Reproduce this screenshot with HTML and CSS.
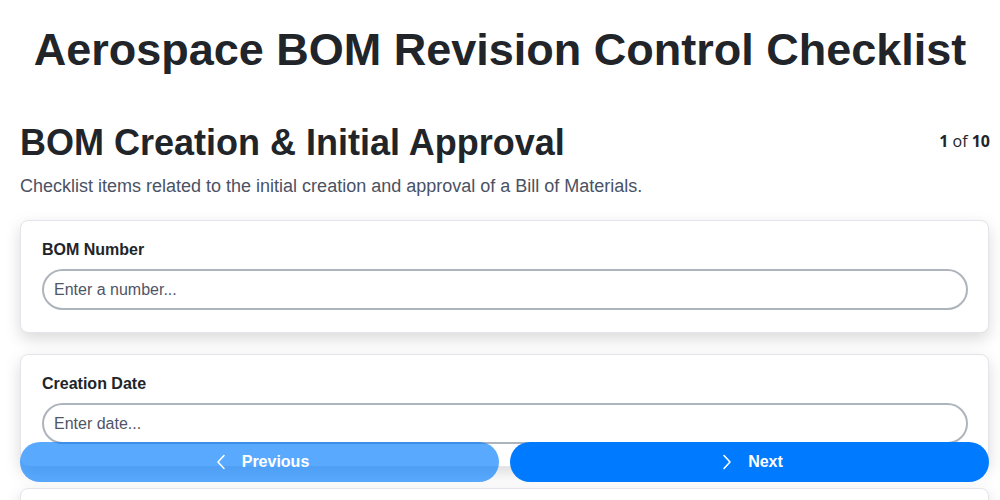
FILE: index.html
```html
<!DOCTYPE html>
<html lang="en">
<head>
<meta charset="utf-8" />
<title>Aerospace BOM Revision Control Checklist</title>
<link rel="stylesheet" href="styles.css">
</head>
<body>
<h1 class="title">Aerospace BOM Revision Control Checklist</h1>

<div class="page">
  <div class="head">
    <h2>BOM Creation &amp; Initial Approval</h2>
    <span class="count"><b>1</b> of <b>10</b></span>
  </div>
  <p class="desc">Checklist items related to the initial creation and approval of a Bill of Materials.</p>

  <div class="card">
    <label class="lbl" for="bom">BOM Number</label>
    <input class="field" id="bom" type="text" placeholder="Enter a number..." />
  </div>

  <div class="card">
    <label class="lbl" for="cdate">Creation Date</label>
    <input class="field" id="cdate" type="text" placeholder="Enter date..." />
  </div>

  <div class="card">
    <label class="lbl" for="author">Created By</label>
    <input class="field" id="author" type="text" placeholder="Enter a name..." />
  </div>
</div>

<div class="nav">
  <button class="btn prev" disabled>
    <svg width="10" height="16" viewBox="0 0 10 16"><path d="M8 1.5 L2 8 L8 14.5" fill="none" stroke="#fff" stroke-width="1.6" stroke-linecap="round" stroke-linejoin="round"/></svg>
    <span>Previous</span>
  </button>
  <button class="btn next">
    <svg width="10" height="16" viewBox="0 0 10 16"><path d="M2 1.5 L8 8 L2 14.5" fill="none" stroke="#fff" stroke-width="1.6" stroke-linecap="round" stroke-linejoin="round"/></svg>
    <span>Next</span>
  </button>
</div>
</body>
</html>
```

FILE: styles.css
```css
*{margin:0;padding:0;box-sizing:border-box;}
body{background:#fff;font-family:"Liberation Sans",Arial,sans-serif;color:#212529;}

.title{font-size:45px;font-weight:bold;text-align:center;margin:24px 0 0 0;color:#212529;}

.page{padding:46px 11px 0 20px;}
.head{display:flex;justify-content:space-between;align-items:flex-start;}
.head h2{font-size:36px;font-weight:bold;color:#212529;}
.count{font-family:"Open Sans","Noto Sans",sans-serif;font-size:16px;color:#212529;margin-top:8px;margin-right:-1px;}
.count b{font-weight:bold;}
.desc{font-size:18px;color:#4a5264;margin:12px 0 23px 0;}

.card{background:#fff;border:1px solid #e4e4ea;border-radius:8px;padding:20px 20px 22px 21px;margin-bottom:21px;box-shadow:0 6px 16px rgba(0,0,0,0.15);}
.lbl{display:block;font-size:16px;font-weight:bold;color:#212529;line-height:17px;margin-bottom:11px;}
.field{display:block;width:100%;height:41px;border:2px solid #adb4bc;border-radius:21px;padding:0 10px;font-family:"Liberation Sans",Arial,sans-serif;font-size:16px;color:#212529;background:#fff;outline:none;}
.field::placeholder{color:#4f5566;}

.nav{position:fixed;left:20px;right:11px;bottom:18px;display:flex;gap:11px;}
.btn{flex:1;height:40px;border:none;border-radius:20px;background:#007bff;color:#fff;font-family:"Liberation Sans",Arial,sans-serif;font-size:16px;font-weight:bold;display:flex;align-items:center;justify-content:center;gap:16px;padding-left:6px;cursor:pointer;}
.btn svg{display:block;}
.prev{opacity:0.65;cursor:default;}
```
